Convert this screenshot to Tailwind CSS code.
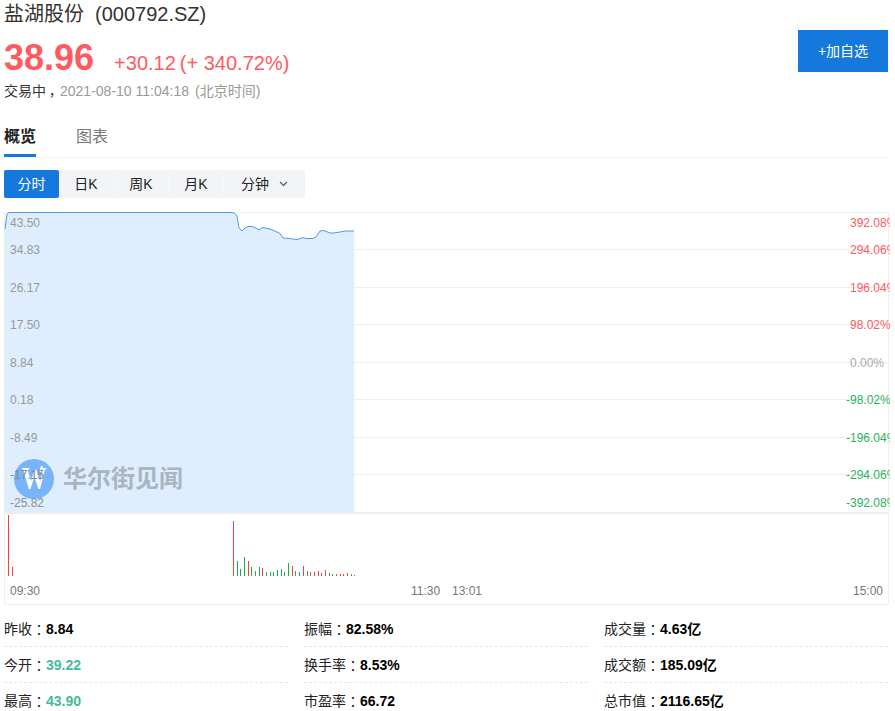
<!DOCTYPE html>
<html lang="zh">
<head>
  <meta charset="UTF-8" />
  <meta name="viewport" content="width=device-width, initial-scale=1.0" />
  <title>盐湖股份</title>
  <script src="https://cdn.jsdelivr.net/npm/@tailwindcss/browser@4"></script>
</head>
<body class="bg-white overflow-hidden h-[711px] font-['Liberation_Sans','Noto_Sans_CJK_SC',sans-serif] text-[#222]">
  <div class="ml-[4px] w-[884px]">

    <!-- header -->
    <div class="flex justify-between h-[100px]">
      <div>
        <div class="h-[28px] leading-[28px] text-[20px] text-[#333]">盐湖股份<span class="ml-[11px]">(000792.SZ)</span></div>
        <div class="mt-[7px] h-[46px] flex items-baseline text-[#ff5a5f]">
          <span class="text-[36px] leading-[46px] font-bold">38.96</span>
          <span class="ml-[20px] text-[20px]">+30.12</span>
          <span class="ml-[4px] text-[20px]">(+ 340.72%)</span>
        </div>
        <div class="h-[19px] leading-[19px] text-[14px] text-[#999]"><span class="text-[#333]">交易中<span lang="zh-Hant" class="relative top-[4px] -left-[1px] font-['Noto_Sans_CJK_TC']">，</span></span>2021-08-10 11:04:18<span class="ml-[6px]">(北京时间)</span></div>
      </div>
      <button class="mt-[30px] w-[90px] h-[42px] bg-[#1478dc] text-white text-[14px]">+加自选</button>
    </div>

    <!-- tabs -->
    <div class="mt-[18px] h-[40px] flex gap-[40px] border-b border-[#f2f2f2] text-[16px]">
      <div class="w-[32px] h-[39px] leading-[38px] font-bold text-[#222] border-b-[3px] border-[#1478dc]">概览</div>
      <div class="w-[32px] leading-[38px] text-[#777]">图表</div>
    </div>

    <!-- period switch -->
    <div class="mt-[12px] w-[301px] h-[28px] flex bg-[#f2f4f7] rounded-[2px] text-[14px] text-[#222]">
      <div class="w-[55px] leading-[28px] text-center bg-[#1478dc] text-white rounded-[2px]">分时</div>
      <div class="w-[55px] leading-[28px] text-center border-r border-white/40">日K</div>
      <div class="w-[55px] leading-[28px] text-center border-r border-white/40">周K</div>
      <div class="w-[55px] leading-[28px] text-center border-r border-white/40">月K</div>
      <div class="w-[81px] flex items-center justify-center gap-[10px]">
        <span>分钟</span>
        <svg width="9" height="6" viewBox="0 0 9 6" fill="none" stroke="#555" stroke-width="1.1"><path d="M1 1l3.5 3.5L8 1" /></svg>
      </div>
    </div>

    <!-- chart -->
    <div class="relative mt-[14px] w-[886px] h-[393px] overflow-hidden text-[12px] leading-[14px]">
      <svg class="absolute left-0 top-0" width="886" height="393" viewBox="4 212 886 393" fill="none">
        <path d="M4 212.5H888M4 249.5H888M4 287.5H888M4 324.5H888M4 362.5H888M4 399.5H888M4 437.5H888M4 474.5H888" stroke="#efefef" />
        <path d="M4 513H888" stroke="#eeeeee" stroke-width="2" />
        <path d="M4.5 212V604.5H888.5V212" stroke="#eeeeee" />
        <path d="M5 231L7 214L9 212.5H232L235 213.5L237 216L239 228L242 231L245 228L248 226.5L252 226.5L255 227.5L259 230L262 227.5L265 228L270 229L275 231L280 233.5L283 238L290 238.5L296 239.5L299 239L303 237.5L306 238.5L313 238.5L316 237L320 231L324 230.5L330 233L334 233L340 232L345 231L354 231V512H5Z" fill="#deeeff" />
        <path d="M5 229L7 214L9 212.5H232L235 213.5L237 216L239 228L242 231L245 228L248 226.5L252 226.5L255 227.5L259 230L262 227.5L265 228L270 229L275 231L280 233.5L283 238L290 238.5L296 239.5L299 239L303 237.5L306 238.5L313 238.5L316 237L320 231L324 230.5L330 233L334 233L340 232L345 231L354 231" stroke="#4c9bf0" />
        <path d="M8.5 576V515M12.5 576V567M233.5 576V521M248.5 576V561M262.5 576V568M292.5 576V566M303.5 576V566M310.5 576V572M314.5 576V572M318.5 576V571M321.5 576V573M325.5 576V570M336.5 576V574M340.5 576V574M343.5 576V574M347.5 576V573M354.5 576V575" stroke="#f43f43" />
        <path d="M237.5 576V561M240.5 576V569M244.5 576V557M251.5 576V567M255.5 576V571M259.5 576V567M266.5 576V572M270.5 576V572M273.5 576V572M277.5 576V570M281.5 576V569M284.5 576V572M288.5 576V563M295.5 576V571M299.5 576V572M307.5 576V571M329.5 576V573M332.5 576V574M351.5 576V574" stroke="#14b14b" />
      </svg>

      <!-- watermark -->
      <div class="absolute left-[10px] top-[247px] flex items-center gap-[9px]">
        <div class="relative w-[40px] h-[40px] rounded-full bg-[#4d9bf7]/70 flex items-center justify-center text-white text-[25px] font-bold font-['Liberation_Serif',serif]">
          <span class="scale-y-130">W</span>
          <span class="absolute left-[26px] top-[7px] w-[2px] h-[6px] bg-white rotate-[20deg]"></span>
        </div>
        <span class="text-[24px] leading-[30px] font-bold text-[#a9b5c1]">华尔街见闻</span>
      </div>

      <!-- left scale -->
      <span class="absolute left-[6px] top-[4px] text-[#999]">43.50</span>
      <span class="absolute left-[6px] top-[31px] text-[#999]">34.83</span>
      <span class="absolute left-[6px] top-[69px] text-[#999]">26.17</span>
      <span class="absolute left-[6px] top-[106px] text-[#999]">17.50</span>
      <span class="absolute left-[6px] top-[144px] text-[#999]">8.84</span>
      <span class="absolute left-[6px] top-[181px] text-[#999]">0.18</span>
      <span class="absolute left-[6px] top-[219px] text-[#999]">-8.49</span>
      <span class="absolute left-[6px] top-[256px] text-[#7f8a96]">-17.15</span>
      <span class="absolute left-[6px] top-[284px] text-[#8f8f8f]">-25.82</span>

      <!-- right scale -->
      <span class="absolute left-[846px] top-[4px] text-[#ff5a5f]">392.08%</span>
      <span class="absolute left-[846px] top-[31px] text-[#ff5a5f]">294.06%</span>
      <span class="absolute left-[846px] top-[69px] text-[#ff5a5f]">196.04%</span>
      <span class="absolute left-[846px] top-[106px] text-[#ff5a5f]">98.02%</span>
      <span class="absolute left-[846px] top-[144px] text-[#aaa]">0.00%</span>
      <span class="absolute left-[842px] top-[181px] text-[#1fb55b]">-98.02%</span>
      <span class="absolute left-[842px] top-[219px] text-[#1fb55b]">-196.04%</span>
      <span class="absolute left-[842px] top-[256px] text-[#1fb55b]">-294.06%</span>
      <span class="absolute left-[842px] top-[284px] text-[#1fb55b]">-392.08%</span>

      <!-- time axis -->
      <span class="absolute left-[6px] top-[372px] text-[#777]">09:30</span>
      <span class="absolute left-[407px] top-[372px] text-[#777]">11:30</span>
      <span class="absolute left-[448px] top-[372px] text-[#777]">13:01</span>
      <span class="absolute left-[849px] top-[372px] text-[#777]">15:00</span>
    </div>

    <!-- stats -->
    <div class="mt-[6px] grid grid-cols-3 gap-x-[16px] text-[14px] text-[#222]">
      <div class="h-[36px] leading-[34px] border-b border-dashed border-[#e8e8e8]">昨收<span lang="zh-Hant" class="relative top-[1px] font-['Noto_Sans_CJK_TC']">：</span><b class="text-black">8.84</b></div>
      <div class="h-[36px] leading-[34px] border-b border-dashed border-[#e8e8e8]">振幅<span lang="zh-Hant" class="relative top-[1px] font-['Noto_Sans_CJK_TC']">：</span><b class="text-black">82.58%</b></div>
      <div class="h-[36px] leading-[34px] border-b border-dashed border-[#e8e8e8]">成交量<span lang="zh-Hant" class="relative top-[1px] font-['Noto_Sans_CJK_TC']">：</span><b class="text-black">4.63亿</b></div>
      <div class="h-[36px] leading-[34px] border-b border-dashed border-[#e8e8e8]">今开<span lang="zh-Hant" class="relative top-[1px] font-['Noto_Sans_CJK_TC']">：</span><b class="text-[#44bb9c]">39.22</b></div>
      <div class="h-[36px] leading-[34px] border-b border-dashed border-[#e8e8e8]">换手率<span lang="zh-Hant" class="relative top-[1px] font-['Noto_Sans_CJK_TC']">：</span><b class="text-black">8.53%</b></div>
      <div class="h-[36px] leading-[34px] border-b border-dashed border-[#e8e8e8]">成交额<span lang="zh-Hant" class="relative top-[1px] font-['Noto_Sans_CJK_TC']">：</span><b class="text-black">185.09亿</b></div>
      <div class="h-[36px] leading-[34px]">最高<span lang="zh-Hant" class="relative top-[1px] font-['Noto_Sans_CJK_TC']">：</span><b class="text-[#44bb9c]">43.90</b></div>
      <div class="h-[36px] leading-[34px]">市盈率<span lang="zh-Hant" class="relative top-[1px] font-['Noto_Sans_CJK_TC']">：</span><b class="text-black">66.72</b></div>
      <div class="h-[36px] leading-[34px]">总市值<span lang="zh-Hant" class="relative top-[1px] font-['Noto_Sans_CJK_TC']">：</span><b class="text-black">2116.65亿</b></div>
    </div>
  </div>
</body>
</html>
